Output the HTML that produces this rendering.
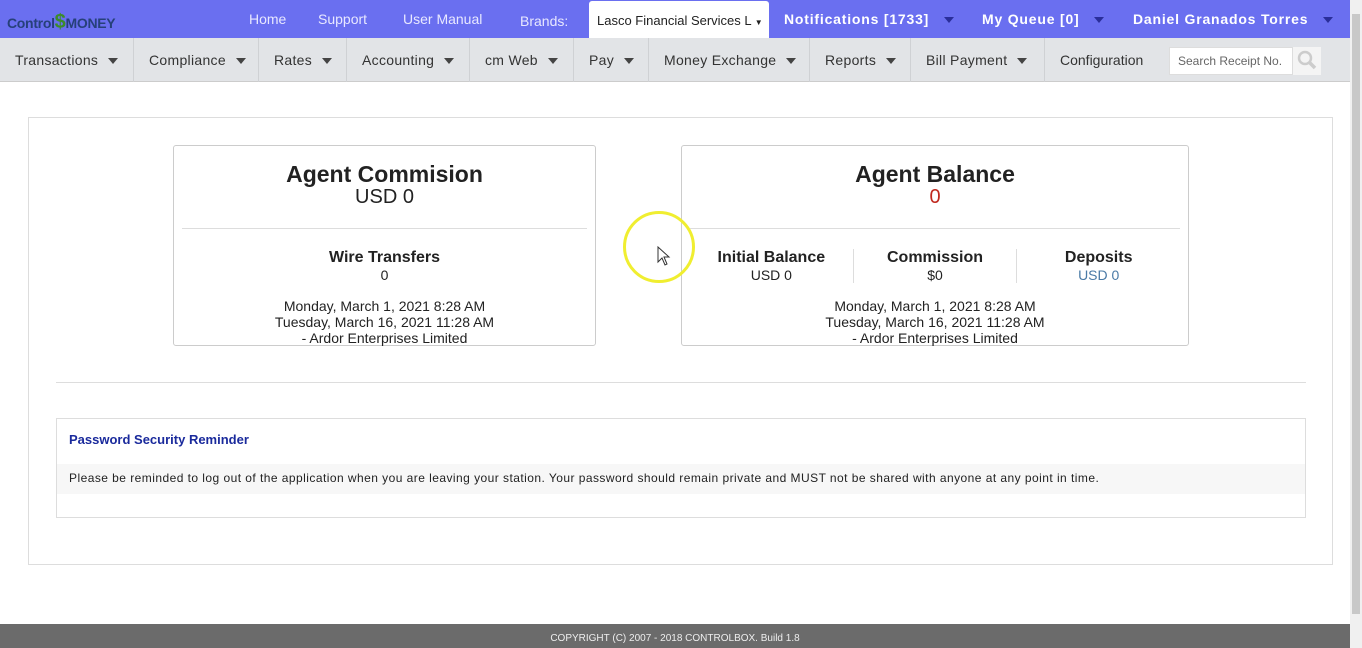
<!DOCTYPE html>
<html><head><meta charset="utf-8"><style>
*{margin:0;padding:0;box-sizing:border-box}
body{width:1362px;height:648px;overflow:hidden;background:#fff;font-family:"Liberation Sans",sans-serif;position:relative;color:#222}
.a{position:absolute;white-space:nowrap}
.top{position:absolute;left:0;top:0;width:1350px;height:38px;background:#6a6ff0}
.top .l{color:#e8e8ff;font-size:14px;top:11px}
.top .b{color:#fff;font-weight:bold;font-size:14px;top:11px;letter-spacing:.8px}
.nav{position:absolute;left:0;top:38px;width:1350px;height:44px;background:#e2e4e7;border-bottom:1px solid #ccc}
.nav .i{position:absolute;top:0;height:44px;line-height:44px;font-size:14px;color:#333;border-right:1px solid #cfd1d4;padding-left:15px;letter-spacing:.3px}
.tri{display:inline-block;width:0;height:0;border-left:5px solid transparent;border-right:5px solid transparent;border-top:6px solid #444;margin-left:10px;vertical-align:middle}
.wt{border-top-color:#2a2e9a}
.card{position:absolute;border:1px solid #ccc;border-radius:3px;text-align:center}
.h{font-size:23px;font-weight:bold;line-height:26px}
.s{font-size:20px;line-height:20px}
.m{font-size:14px;line-height:16px}
.bb{font-size:16px;font-weight:bold;line-height:18px}
</style></head><body>
<div class="top">
<div class="a" style="left:7px;top:11px;font-weight:bold;font-size:14px;color:#26407a;letter-spacing:-.3px">Control<span style="color:#3c8c2a;font-size:20px">$</span>MONEY</div>
<div class="a l" style="left:249px">Home</div>
<div class="a l" style="left:318px">Support</div>
<div class="a l" style="left:403px">User Manual</div>
<div class="a l" style="left:520px;top:13px">Brands:</div>
<div class="a" style="left:589px;top:1px;width:180px;height:37px;background:#fff;border-radius:3px 3px 0 0;font-size:13px;padding:12px 0 0 8px;overflow:hidden;color:#222">Lasco Financial Services L <span style="font-size:8px">▼</span></div>
<div class="a b" style="left:784px">Notifications [1733] <span class="tri wt"></span></div>
<div class="a b" style="left:982px">My Queue [0] <span class="tri wt"></span></div>
<div class="a b" style="left:1133px">Daniel Granados Torres <span class="tri wt"></span></div>
</div>
<div style="position:absolute;left:1350px;top:0;width:12px;height:648px;background:#f0f0f0"><div style="position:absolute;left:2px;top:14px;width:8px;height:600px;background:#c8c8c8"></div></div>
<div class="nav">
<div class="i" style="left:0;width:134px">Transactions<span class="tri"></span></div>
<div class="i" style="left:134px;width:125px">Compliance<span class="tri"></span></div>
<div class="i" style="left:259px;width:88px">Rates<span class="tri"></span></div>
<div class="i" style="left:347px;width:123px">Accounting<span class="tri"></span></div>
<div class="i" style="left:470px;width:104px">cm Web<span class="tri"></span></div>
<div class="i" style="left:574px;width:75px">Pay<span class="tri"></span></div>
<div class="i" style="left:649px;width:161px">Money Exchange<span class="tri"></span></div>
<div class="i" style="left:810px;width:101px">Reports<span class="tri"></span></div>
<div class="i" style="left:911px;width:134px">Bill Payment<span class="tri"></span></div>
<div class="i" style="left:1045px;border:none;letter-spacing:0">Configuration</div>
<div class="a" style="left:1169px;top:9px;width:124px;height:28px;background:#fff;border:1px solid #ddd;font-size:12px;color:#666;padding:6px 0 0 8px">Search Receipt No.</div>
<div class="a" style="left:1293px;top:9px;width:28px;height:28px;background:#f4f4f4"><svg width="28" height="28"><circle cx="12" cy="11" r="6" fill="none" stroke="#ccc" stroke-width="2.5"/><line x1="16" y1="15" x2="22" y2="21" stroke="#ccc" stroke-width="3.5"/></svg></div>
</div>
<div style="position:absolute;left:28px;top:117px;width:1305px;height:448px;border:1px solid #ddd"></div>
<div class="card" style="left:173px;top:145px;width:423px;height:201px">
<div class="h" style="margin-top:15px">Agent Commision</div>
<div class="s">USD 0</div>
<div style="margin:21px 8px 0;border-top:1px solid #ddd"></div>
<div class="bb" style="margin-top:20px">Wire Transfers</div>
<div class="m">0</div>
<div class="m" style="margin-top:15px">Monday, March 1, 2021 8:28 AM<br>Tuesday, March 16, 2021 11:28 AM<br>- Ardor Enterprises Limited</div>
</div>
<div class="card" style="left:681px;top:145px;width:508px;height:201px">
<div class="h" style="margin-top:15px">Agent Balance</div>
<div class="s" style="color:#c0281e">0</div>
<div style="margin:21px 8px 0;border-top:1px solid #ddd"></div>
<div style="display:flex;margin-top:20px;padding:0 8px">
<div style="flex:1"><div class="bb">Initial Balance</div><div class="m">USD 0</div></div>
<div style="flex:1;border-left:1px solid #ddd;border-right:1px solid #ddd"><div class="bb">Commission</div><div class="m">$0</div></div>
<div style="flex:1"><div class="bb">Deposits</div><div class="m" style="color:#4a7aa6">USD 0</div></div>
</div>
<div class="m" style="margin-top:15px">Monday, March 1, 2021 8:28 AM<br>Tuesday, March 16, 2021 11:28 AM<br>- Ardor Enterprises Limited</div>
</div>
<div class="a" style="left:623px;top:211px;width:72px;height:72px;border:3px solid #f0ee30;border-radius:50%"></div>
<svg class="a" style="left:657px;top:246px" width="14" height="20"><path d="M1 1 L1 16 L5 12 L8 19 L10 18 L7 11 L12 11 Z" fill="#fff" stroke="#333"/></svg>
<div style="position:absolute;left:56px;top:382px;width:1250px;border-top:1px solid #ddd"></div>
<div style="position:absolute;left:56px;top:418px;width:1250px;height:100px;border:1px solid #ddd">
<div class="a" style="left:12px;top:13px;font-size:13px;font-weight:bold;color:#1a2a9c">Password Security Reminder</div>
<div class="a" style="left:0;top:45px;width:1248px;height:30px;background:#f7f7f7;font-size:12px;padding:7px 0 0 12px;color:#222;letter-spacing:.45px">Please be reminded to log out of the application when you are leaving your station. Your password should remain private and MUST not be shared with anyone at any point in time.</div>
</div>
<div style="position:absolute;left:0;top:624px;width:1350px;height:24px;background:#6b6b6b;color:#eee;font-size:10px;text-align:center;padding-top:9px">COPYRIGHT (C) 2007 - 2018 CONTROLBOX.  Build 1.8</div>
</body></html>
